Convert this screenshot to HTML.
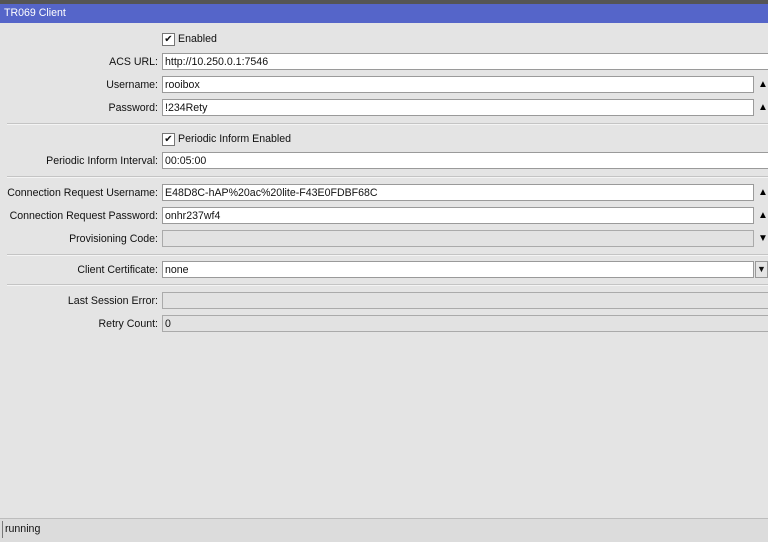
<!DOCTYPE html>
<html><head><style>
body{margin:0;width:768px;height:541px;background:#e4e4e4;font-family:"Liberation Sans",sans-serif;font-size:10.6px;color:#111;position:relative;overflow:hidden}
.top{position:absolute;left:0;top:0;width:768px;height:4px;background:#555}
.title{position:absolute;left:0;top:4px;width:768px;height:19px;background:#5565c9;color:#fff;font-size:10.6px;line-height:19px;padding-left:4px;box-sizing:border-box}
.lbl{position:absolute;right:610px;text-align:right;white-space:nowrap;line-height:18px}
.f{position:absolute;left:162px;width:592px;height:17px;box-sizing:border-box;border:1px solid #9a9a9a;background:#fff;line-height:16px;padding-left:2px;white-space:nowrap}
.f.d{background:#e2e2e2;border-color:#aaa}
.f.w{width:610px}
.sep{position:absolute;left:7px;width:761px;height:1px;background:#c4c4c4;border-bottom:1px solid #f4f4f4}
.ar{position:absolute;left:758px;font-size:10px;line-height:17px;color:#000}
.cb{position:absolute;left:162px;height:14px;display:flex;align-items:center;white-space:nowrap}
.cb span{display:inline-block;width:11px;height:11px;border:1px solid #777;background:#fff;margin-right:3px;font-size:10px;line-height:11px;text-align:center}
.status{position:absolute;left:0;top:518px;width:768px;height:23px;background:#dcdcdc;border-top:1px solid #bdbdbd}
.status div{position:absolute;left:2px;top:2px;width:764px;height:17px;border-left:1px solid #777;line-height:17px;padding-left:2px}
</style></head><body>
<div class="top"></div>
<div class="title">TR069 Client</div>
<div class="cb" style="top:32px"><span>✔</span>Enabled</div>
<div class="lbl" style="top:53px">ACS URL:</div><div class="f w" style="top:53px">http://10.250.0.1:7546</div>
<div class="lbl" style="top:76px">Username:</div><div class="f" style="top:76px">rooibox</div><div class="ar" style="top:76px">▲</div>
<div class="lbl" style="top:99px">Password:</div><div class="f" style="top:99px">!234Rety</div><div class="ar" style="top:99px">▲</div>
<div class="sep" style="top:123px"></div>
<div class="cb" style="top:132px"><span>✔</span>Periodic Inform Enabled</div>
<div class="lbl" style="top:152px">Periodic Inform Interval:</div><div class="f w" style="top:152px">00:05:00</div>
<div class="sep" style="top:176px"></div>
<div class="lbl" style="top:184px">Connection Request Username:</div><div class="f" style="top:184px">E48D8C-hAP%20ac%20lite-F43E0FDBF68C</div><div class="ar" style="top:184px">▲</div>
<div class="lbl" style="top:207px">Connection Request Password:</div><div class="f" style="top:207px">onhr237wf4</div><div class="ar" style="top:207px">▲</div>
<div class="lbl" style="top:230px">Provisioning Code:</div><div class="f d" style="top:230px"></div><div class="ar" style="top:230px">▼</div>
<div class="sep" style="top:254px"></div>
<div class="lbl" style="top:261px">Client Certificate:</div><div class="f" style="top:261px">none</div><div style="position:absolute;left:755px;top:261px;width:13px;height:17px;box-sizing:border-box;border:1px solid #999;font-size:9px;text-align:center;line-height:15px">▼</div>
<div class="sep" style="top:284px"></div>
<div class="lbl" style="top:292px">Last Session Error:</div><div class="f d w" style="top:292px"></div>
<div class="lbl" style="top:315px">Retry Count:</div><div class="f d w" style="top:315px">0</div>
<div class="status"><div>running</div></div>
</body></html>
